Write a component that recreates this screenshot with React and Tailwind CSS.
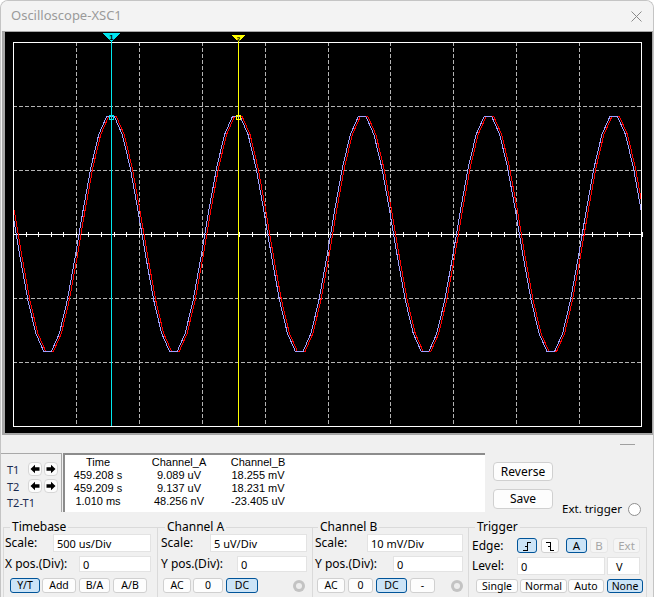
import React from 'react';

// screen geometry (page coordinates, the svg viewBox matches the page)
const X0 = 13;
const Y0 = 42;
const W = 629;
const H = 384;
const DX = W / 10;
const DY = H / 6;
const CY = Y0 + H / 2;
const PERIOD = 125.8;
const AMP = 119.5;

const tracePoints = (center) => {
  const step = PERIOD / 16;
  let x = center + step / 2;
  while (x > X0 - step) x -= step;
  const pts = [];
  for (; x <= X0 + W + step; x += step) {
    const y = CY - AMP * Math.cos((2 * Math.PI * (x - center)) / PERIOD);
    pts.push(`${x.toFixed(2)},${y.toFixed(2)}`);
  }
  return pts.join(' ');
};

const traceA = tracePoints(110.5);
const traceB = tracePoints(112.5);

const Screen = () => {
  const vLines = Array.from({ length: 9 }, (_, i) => X0 + (i + 1) * DX);
  const hLines = [1, 2, 4, 5].map((j) => Y0 + j * DY);
  const ticks = Array.from({ length: 51 }, (_, i) => X0 + (i * DX) / 5);
  return (
    <svg width="647" height="401" viewBox="5 32 647 401" className="block" shapeRendering="crispEdges">
      <defs>
        <clipPath id="frame">
          <rect x={X0} y={Y0} width={W} height={H} />
        </clipPath>
      </defs>
      {vLines.map((x) => (
        <line key={x} x1={Math.round(x) + 0.5} y1={Y0} x2={Math.round(x) + 0.5} y2={Y0 + H} stroke="#b4b4b4" strokeDasharray="4 2" />
      ))}
      {hLines.map((y) => (
        <line key={y} x1={X0} y1={Math.round(y) + 0.5} x2={X0 + W} y2={Math.round(y) + 0.5} stroke="#b4b4b4" strokeDasharray="4 2" />
      ))}
      <line x1={X0} y1={CY + 0.5} x2={X0 + W} y2={CY + 0.5} stroke="#ffffff" />
      {ticks.map((x) => (
        <line key={x} x1={Math.round(x) + 0.5} y1={CY - 2} x2={Math.round(x) + 0.5} y2={CY + 3} stroke="#ffffff" />
      ))}
      <g clipPath="url(#frame)">
        <polyline points={traceB} fill="none" stroke="#ff0000" />
        <polyline points={traceA} fill="none" stroke="#a0a0ff" />
      </g>
      <rect x={X0 + 0.5} y={Y0 + 0.5} width={W - 1} height={H} fill="none" stroke="#ffffff" />
      {/* cursors */}
      <line x1="111.5" y1={Y0} x2="111.5" y2={Y0 + H} stroke="#00e8ee" />
      <line x1="238.5" y1={Y0} x2="238.5" y2={Y0 + H} stroke="#ffff00" />
      <rect x="109.5" y="115.5" width="4" height="4" fill="none" stroke="#00e8ee" />
      <rect x="236.5" y="115.5" width="4" height="4" fill="none" stroke="#ffff00" />
      <polygon points="103,33 120,33 111.5,42" fill="#00e5ee" />
      <text x="111.5" y="40" fontSize="8" fontWeight="700" textAnchor="middle" fill="#000" fontFamily="'Liberation Sans', sans-serif">1</text>
      <polygon points="232,35 245,35 238.5,42" fill="#ffff00" />
      <text x="238.5" y="40.5" fontSize="6" fontWeight="700" textAnchor="middle" fill="#000" fontFamily="'Liberation Sans', sans-serif">2</text>
    </svg>
  );
};

const Arrow = ({ dir }) => (
  <div className="w-[14px] h-[14px] rounded-[4px] bg-[#fcfcfc] border border-[#d6d6d6] flex items-center justify-center">
    <svg width="10" height="10" viewBox="0 0 10 10">
      {dir === 'left' ? (
        <polygon points="0.5,5 5,0.8 5,3.3 9.5,3.3 9.5,6.7 5,6.7 5,9.2" fill="#000" />
      ) : (
        <polygon points="9.5,5 5,0.8 5,3.3 0.5,3.3 0.5,6.7 5,6.7 5,9.2" fill="#000" />
      )}
    </svg>
  </div>
);

const Btn = ({ children, className = '', active, disabled }) => {
  const look = active
    ? 'bg-[#cce4f7] border-[#005499] text-black'
    : disabled
    ? 'bg-[#f5f5f5] border-[#e6e6e6] text-[#a6a6a6]'
    : 'bg-[#fdfdfd] border-[#d0d0d0] text-black';
  return (
    <div className={`h-full flex items-center justify-center rounded-[3px] border text-[10.5px] leading-none ${look} ${className}`}>
      {children}
    </div>
  );
};

const Field = ({ children, className = '' }) => (
  <div className={`h-full bg-white border border-[#e3e3e3] flex items-center pl-[3px] text-[11px] leading-none ${className}`}>
    {children}
  </div>
);

const DimRadio = () => (
  <div className="w-[12px] h-[12px] rounded-full bg-[#c3c3c3] flex items-center justify-center">
    <div className="w-[6px] h-[6px] rounded-full bg-[#ededed]" />
  </div>
);

const EdgeIcon = ({ rising }) => (
  <svg width="12" height="12" viewBox="0 0 12 12" shapeRendering="crispEdges">
    <path d={rising ? 'M2 10.5 H6.5 V2.5 H10' : 'M2 2.5 H6.5 V10.5 H10'} fill="none" stroke="#000" />
    <path d="M4 6.5 H6.5" fill="none" stroke="#000" />
  </svg>
);

const Label = ({ children, className = '' }) => (
  <span className={`text-[12px] leading-none ${className}`}>{children}</span>
);

export default function App() {
  return (
    <div className="w-[654px] h-[597px] overflow-hidden bg-[#f0f0f0] rounded-t-[8px] border border-b-0 border-[#c4c4c4] font-['Noto_Sans',sans-serif] text-black">
      {/* Title bar */}
      <div className="h-[30px] bg-[#f3f3f3] flex items-center justify-between pl-[10px] pr-[11px]">
        <span className="text-[13px] text-[#9a9a9a]">Oscilloscope-XSC1</span>
        <svg width="11" height="11" viewBox="0 0 11 11">
          <path d="M0.5 0.5 L10.5 10.5 M10.5 0.5 L0.5 10.5" stroke="#8a8a8a" strokeWidth="1" />
        </svg>
      </div>

      {/* Screen */}
      <div className="ml-[1px] w-[651px] border-t border-l-[3px] border-r border-b-2 border-[#a6a6a6] bg-black">
        <Screen />
      </div>

      {/* splitter */}
      <div className="h-[18px] flex items-center justify-end pr-[18px]">
        <div className="w-[15px] h-px bg-[#a0a0a0]" />
      </div>

      {/* Cursor readout */}
      <div className="h-[59px] flex items-start">
        <div className="w-[61px] h-[59px] border-t border-r border-[#a8a8a8] pt-[8px] pl-[6px] flex flex-col text-[11px] leading-none text-[#1b2b50]">
          <div className="h-[14px] flex items-center">
            <span className="w-[21px]">T1</span>
            <Arrow dir="left" />
            <div className="w-[2px]" />
            <Arrow dir="right" />
          </div>
          <div className="h-[14px] mt-[3px] flex items-center">
            <span className="w-[21px]">T2</span>
            <Arrow dir="left" />
            <div className="w-[2px]" />
            <Arrow dir="right" />
          </div>
          <div className="h-[14px] mt-[2px] flex items-center">T2-T1</div>
        </div>
        <div className="ml-[1px] w-[422px] h-[59px] bg-white border-t-2 border-l-2 border-[#8c8c8c] pt-[1px] font-['Liberation_Sans',sans-serif] text-[11px] leading-[13px]">
          <div className="grid grid-cols-[66px_96px_62px] text-center">
            <div>Time</div>
            <div>Channel_A</div>
            <div>Channel_B</div>
            <div>459.208 s</div>
            <div>9.089 uV</div>
            <div>18.255 mV</div>
            <div>459.209 s</div>
            <div>9.137 uV</div>
            <div>18.231 mV</div>
            <div>1.010 ms</div>
            <div>48.256 nV</div>
            <div>-23.405 uV</div>
          </div>
        </div>
        <div className="ml-[8px] pt-[9px] flex flex-col gap-[8px] w-[60px]">
          <div className="h-[19px] rounded-[4px] bg-[#fdfdfd] border border-[#d0d0d0] flex items-center justify-center text-[12px] leading-none">Reverse</div>
          <div className="h-[20px] rounded-[4px] bg-[#fdfdfd] border border-[#d0d0d0] flex items-center justify-center text-[12px] leading-none">Save</div>
        </div>
        <div className="ml-[9px] mt-[49px] h-[14px] flex items-center gap-[6px]">
          <span className="text-[11.5px] leading-none">Ext. trigger</span>
          <div className="w-[13px] h-[13px] rounded-full bg-white border border-[#8f8f8f]" />
        </div>
      </div>

      {/* Control groups */}
      <div className="mt-[8px] pl-[2px] flex items-start">
        <fieldset className="w-[155px] h-[80px] border-l border-t border-r border-[#dadada] pl-[1px] pr-[6px]">
          <legend className="ml-[5px] px-[2px] text-[12px] leading-[14px]">Timebase</legend>
          <div className="h-[18px] flex items-center justify-between">
            <Label>Scale:</Label>
            <Field className="w-[98px]">500 us/Div</Field>
          </div>
          <div className="h-[16px] mt-[4px] flex items-center justify-between">
            <Label>X pos.(Div):</Label>
            <Field className="w-[72px]">0</Field>
          </div>
          <div className="h-[15px] mt-[6px] ml-[5px] flex items-center">
            <Btn active className="w-[30px]">Y/T</Btn>
            <Btn className="w-[34px] ml-[2px]">Add</Btn>
            <Btn className="w-[31px] ml-[3px]">B/A</Btn>
            <Btn className="w-[34px] ml-[3px]">A/B</Btn>
          </div>
        </fieldset>

        <fieldset className="w-[155px] h-[80px] border-t border-r border-[#dadada] pl-[3px] pr-[5px]">
          <legend className="ml-[4px] px-[2px] text-[12px] leading-[14px]">Channel A</legend>
          <div className="h-[18px] flex items-center justify-between">
            <Label>Scale:</Label>
            <Field className="w-[97px]">5 uV/Div</Field>
          </div>
          <div className="h-[16px] mt-[4px] flex items-center justify-between">
            <Label>Y pos.(Div):</Label>
            <Field className="w-[70px]">0</Field>
          </div>
          <div className="h-[15px] mt-[6px] ml-[2px] flex items-center">
            <Btn className="w-[28px]">AC</Btn>
            <Btn className="w-[30px] ml-[2px]">0</Btn>
            <Btn active className="w-[32px] ml-[3px]">DC</Btn>
            <div className="ml-[35px]">
              <DimRadio />
            </div>
          </div>
        </fieldset>

        <fieldset className="w-[156px] h-[80px] border-t border-r border-[#dadada] pl-[2px] pr-[5px]">
          <legend className="ml-[3px] px-[2px] text-[12px] leading-[14px]">Channel B</legend>
          <div className="h-[18px] flex items-center justify-between">
            <Label>Scale:</Label>
            <Field className="w-[96px]">10 mV/Div</Field>
          </div>
          <div className="h-[16px] mt-[4px] flex items-center justify-between">
            <Label>Y pos.(Div):</Label>
            <Field className="w-[70px]">0</Field>
          </div>
          <div className="h-[15px] mt-[6px] ml-[2px] flex items-center">
            <Btn className="w-[28px]">AC</Btn>
            <Btn className="w-[25px] ml-[3px]">0</Btn>
            <Btn active className="w-[31px] ml-[3px]">DC</Btn>
            <Btn className="w-[25px] ml-[3px]">-</Btn>
            <div className="ml-[16px]">
              <DimRadio />
            </div>
          </div>
        </fieldset>

        <fieldset className="w-[178px] h-[80px] border-t border-r border-[#dadada] pl-[3px]">
          <legend className="ml-[3px] px-[2px] text-[12px] leading-[14px]">Trigger</legend>
          <div className="h-[15px] mt-[4px] flex items-center">
            <Label className="w-[45px]">Edge:</Label>
            <Btn active className="w-[20px]"><EdgeIcon rising /></Btn>
            <Btn className="w-[18px] ml-[4px]"><EdgeIcon /></Btn>
            <Btn active className="w-[21px] ml-[7px] text-[11.5px]">A</Btn>
            <Btn disabled className="w-[18px] ml-[3px] text-[11.5px]">B</Btn>
            <Btn disabled className="w-[27px] ml-[5px] text-[11.5px]">Ext</Btn>
          </div>
          <div className="h-[18px] mt-[4px] flex items-center">
            <Label className="w-[45px]">Level:</Label>
            <Field className="w-[88px] items-end pb-[2px]">0</Field>
            <Field className="w-[33px] ml-[2px] pl-[8px]">V</Field>
          </div>
          <div className="h-[14px] mt-[4px] ml-[4px] flex items-center">
            <Btn className="w-[42px]">Single</Btn>
            <Btn className="w-[47px] ml-[2px]">Normal</Btn>
            <Btn className="w-[36px] ml-[1px]">Auto</Btn>
            <Btn active className="w-[36px] ml-[3px]">None</Btn>
          </div>
        </fieldset>
      </div>
    </div>
  );
}
